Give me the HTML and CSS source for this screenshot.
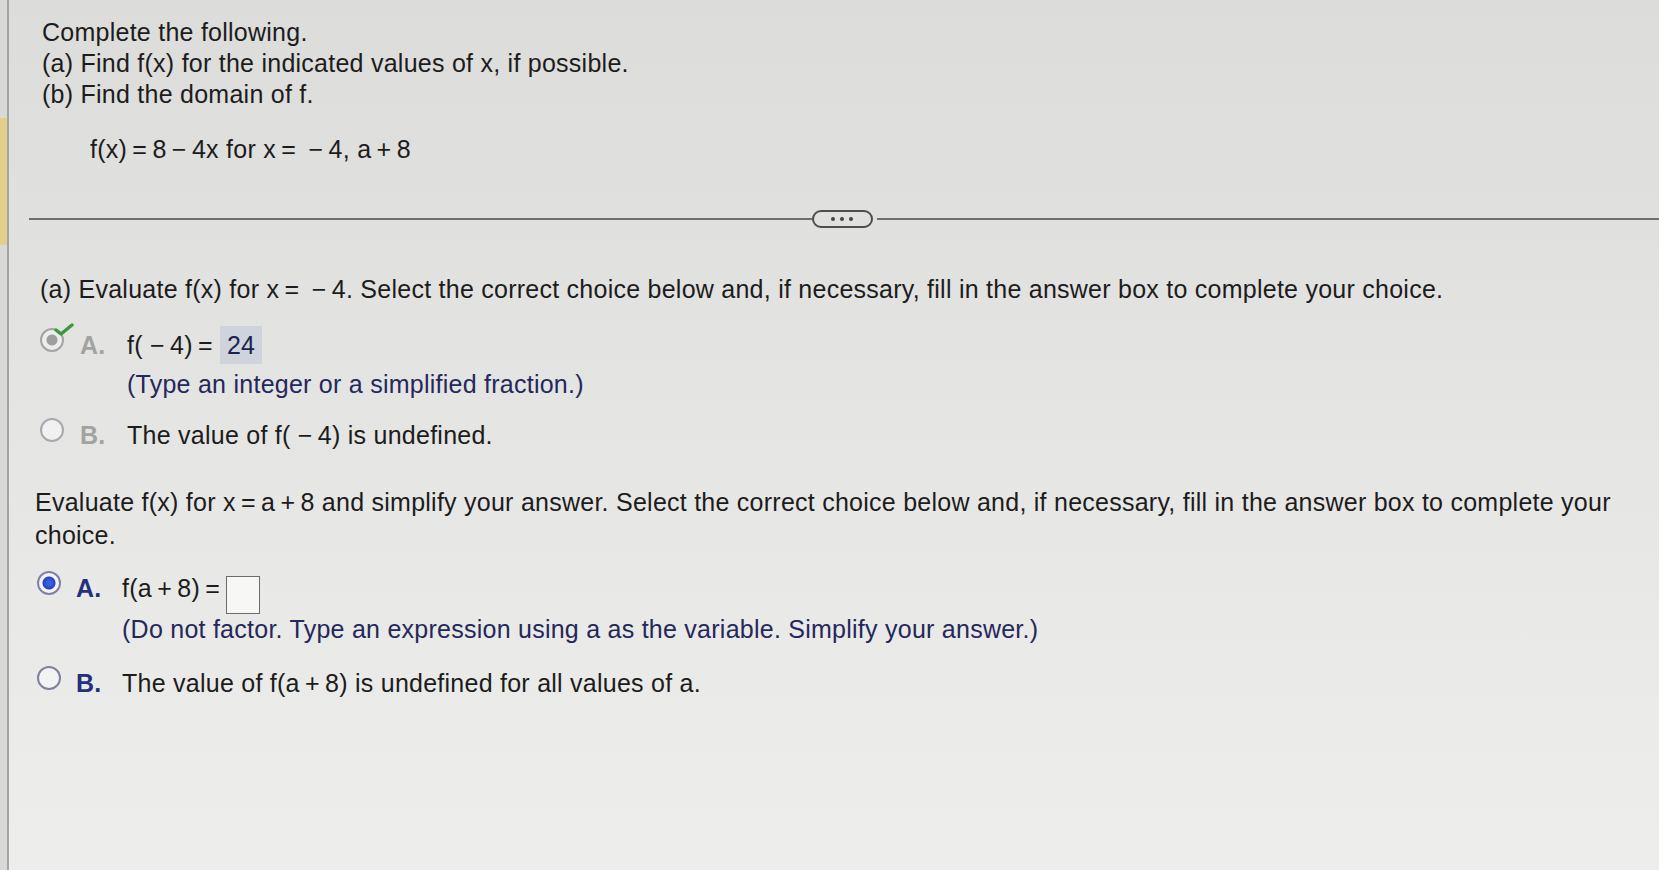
FILE: index.html
```html
<!DOCTYPE html>
<html lang="en">
<head>
<meta charset="utf-8">
<title>Complete the following</title>
<link rel="stylesheet" href="styles.css">
</head>
<body>
<div class="gutter">
  <div class="gutter-top"></div>
  <div class="tab"></div>
</div>
<div class="vline"></div>
<main class="main">
  <div class="prompt">
    <p>Complete the following.</p>
    <p><b class="part">(a)</b> Find f(x) for the indicated values of x, if possible.</p>
    <p><b class="part">(b)</b> Find the domain of f.</p>
  </div>
  <p class="formula">f(x)&thinsp;=&thinsp;8&thinsp;−&thinsp;4x for x&thinsp;=&thinsp; −&thinsp;4, a&thinsp;+&thinsp;8</p>

  <div class="rule">
    <div class="rule-line"></div>
    <div class="more"><span></span><span></span><span></span></div>
    <div class="rule-line"></div>
  </div>

  <section class="part-a">
    <p class="question"><b class="part">(a)</b> Evaluate f(x) for x&thinsp;=&thinsp; −&thinsp;4. Select the correct choice below and, if necessary, fill in the answer box to complete your choice.</p>
    <div class="choices">
      <div class="choice">
        <div class="radio radio-done">
          <svg class="check" viewBox="0 0 20 14" width="20" height="14"><path d="M2 7 L7 11 L18 2" fill="none" stroke="#3a9a3a" stroke-width="3.4" stroke-linecap="round" stroke-linejoin="round"/></svg>
        </div>
        <span class="label label-done">A.</span>
        <span class="content">f( −&thinsp;4)&thinsp;=<span class="answer">24</span></span>
        <span class="hint">(Type an integer or a simplified fraction.)</span>
      </div>
      <div class="choice choice-b">
        <div class="radio radio-off"></div>
        <span class="label label-done">B.</span>
        <span class="content">The value of f( −&thinsp;4) is undefined.</span>
      </div>
    </div>
  </section>

  <section class="part-a2">
    <p class="question2">Evaluate f(x) for x&thinsp;=&thinsp;a&thinsp;+&thinsp;8 and simplify your answer. Select the correct choice below and, if necessary, fill in the answer box to complete your choice.</p>
    <div class="choices2">
      <div class="choice">
        <div class="radio radio-on"></div>
        <span class="label">A.</span>
        <span class="content">f(a&thinsp;+&thinsp;8)&thinsp;=<span class="blank"></span></span>
        <span class="hint">(Do not factor. Type an expression using a as the variable. Simplify your answer.)</span>
      </div>
      <div class="choice choice-b">
        <div class="radio radio-off2"></div>
        <span class="label">B.</span>
        <span class="content">The value of f(a&thinsp;+&thinsp;8) is undefined for all values of a.</span>
      </div>
    </div>
  </section>
</main>
</body>
</html>
```

FILE: styles.css
```css
html, body {
  margin: 0;
  padding: 0;
}

body {
  width: 1659px;
  height: 870px;
  overflow: hidden;
  display: flex;
  font-family: "Liberation Sans", Arial, sans-serif;
  font-size: 25px;
  letter-spacing: 0.25px;
  color: #1c1c1c;
  background: linear-gradient(180deg, #dcdcda 0%, #e2e2e0 35%, #e9e9e7 70%, #ededeb 100%);
}

p {
  margin: 0;
}

.gutter {
  width: 7px;
  display: flex;
  flex-direction: column;
  background: #d9d9d7;
}

.gutter-top {
  height: 118px;
}

.tab {
  height: 127px;
  background: #e2cf8c;
}

.vline {
  width: 2px;
  background: #a4a4a4;
}

.main {
  flex: 1;
  min-width: 0;
}

.part {
  font-weight: normal;
}

.prompt {
  padding: 17px 0 0 33px;
  line-height: 31px;
}

.formula {
  margin: 24px 0 0 81px;
  line-height: 30px;
}

.rule {
  margin: 46px 0 0 20px;
  display: flex;
  align-items: center;
  height: 18px;
}

.rule-line {
  flex: 1;
  height: 2px;
  background: #6f6f6f;
}

.more {
  width: 57px;
  height: 14px;
  border: 2px solid #4d4d4d;
  border-radius: 9px;
  display: flex;
  align-items: center;
  justify-content: center;
  gap: 5px;
  margin-right: 4px;
}

.more span {
  width: 4px;
  height: 4px;
  border-radius: 50%;
  background: #444;
}

.part-a {
  padding-left: 31px;
}

.question {
  margin-top: 46px;
  line-height: 30px;
}

.choices {
  margin-top: 26px;
}

.choice {
  display: grid;
  grid-template-columns: 40px 47px 1fr;
  line-height: 30px;
}

.choices2 .choice {
  grid-template-columns: 39px 46px 1fr;
}

.choice-b {
  margin-top: 21px;
}

.choices2 .choice-b {
  margin-top: 24px;
}

.radio {
  position: relative;
  width: 24px;
  height: 24px;
  box-sizing: border-box;
  border-radius: 50%;
  margin-top: -2px;
}

.radio-done {
  border: 2px solid #a3a3a3;
  background: radial-gradient(circle, #9e9e9e 0 5px, #ececec 6px);
}

.check {
  position: absolute;
  left: 12px;
  top: -7px;
}

.radio-off {
  border: 2px solid #a9a9ad;
  background: #f1f1f1;
}

.radio-on {
  border: 2px solid #7d82a8;
  background: radial-gradient(circle, #3b5fe0 0 2px, #2443c0 6px, #f4f4f8 7px);
}

.radio-off2 {
  border: 2px solid #7f829a;
  background: #f3f3f3;
}

.label {
  font-weight: bold;
  color: #22307e;
}

.label-done {
  color: #a2a2a2;
}

.content {
  color: #1c1c1c;
}

.answer {
  display: inline-block;
  margin: -4px 0 -4px 7px;
  padding: 4px 7px;
  background: #cfd3dc;
  color: #1b2350;
}

.hint {
  grid-column: 3;
  margin-top: 9px;
  color: #24285a;
}

.choices2 .hint {
  margin-top: 6px;
}

.blank {
  display: inline-block;
  width: 32px;
  height: 36px;
  margin: -6px 0 -6px 6px;
  vertical-align: -11px;
  border: 1.5px solid #6b6b6b;
  background: #f7f7f6;
}

.part-a2 {
  padding-left: 26px;
}

.question2 {
  margin-top: 36px;
  line-height: 33px;
  padding-right: 20px;
}

.choices2 {
  margin-top: 21px;
  margin-left: 2px;
}
```
